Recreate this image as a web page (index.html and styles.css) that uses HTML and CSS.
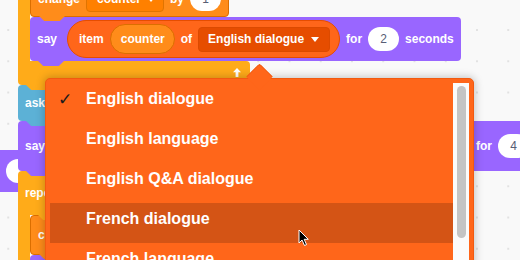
FILE: index.html
```html
<!DOCTYPE html>
<html lang="en">
<head>
    <meta charset="UTF-8">
    <meta name="viewport" content="width=device-width, initial-scale=1.0">
    <title>Scratch - list menu</title>
    <link rel="stylesheet" href="styles.css">
</head>
<body>
<div class="workspace">
    <!-- loose block at the left edge of the canvas -->
    <div class="script script-left">
        <div class="block looks block-think">think <span class="num"></span></div>
    </div>

    <div class="script script-main">
        <div class="c-block">
            <div class="c-body">
                <div class="c-arm"></div>
                <div class="c-inner">
                    <div class="block variables block-change">
                        change <span class="field">counter <i class="caret"></i></span> by <span class="num">1</span>
                    </div>
                    <div class="block looks block-say">
                        <span class="label">say</span>
                        <span class="reporter list">item <span class="var">counter</span> of <span class="field dark">English dialogue <i class="caret"></i></span></span>
                        for <span class="num">2</span> seconds
                    </div>
                </div>
            </div>
            <div class="block control c-bottom">
                <svg class="loop-icon" width="8" height="9" viewBox="0 0 8 9"><path d="M4 0 L8 4.2 L5.4 4.2 L5.4 9 L2.6 9 L2.6 4.2 L0 4.2 Z" fill="#fff"/></svg>
            </div>
        </div>
        <div class="block sensing block-ask">ask <span class="num">What's your name?</span> and wait</div>
        <div class="block looks block-say4">
            <span class="label">say</span>
            <span class="reporter join">join <span class="num">Hello</span></span>
            for <span class="num">4</span> seconds
        </div>
        <div class="c-block">
            <div class="block control c-head">repeat <span class="num">10</span></div>
            <div class="c-body">
                <div class="c-arm"></div>
                <div class="c-inner">
                    <div class="block variables block-inner">change <span class="field">counter <i class="caret"></i></span> by <span class="num">1</span></div>
                    <div class="block looks block-inner">next costume</div>
                </div>
            </div>
            <div class="block control c-bottom"></div>
        </div>
    </div>

    <!-- open dropdown of the list field -->
    <div class="dropdown">
        <div class="dropdown-arrow"></div>
        <div class="menu">
            <div class="menu-item"><span class="check">✓</span>English dialogue</div>
            <div class="menu-item"><span class="check"></span>English language</div>
            <div class="menu-item"><span class="check"></span>English Q&amp;A dialogue</div>
            <div class="menu-item hover"><span class="check"></span>French dialogue</div>
            <div class="menu-item"><span class="check"></span>French language</div>
            <div class="menu-item"><span class="check"></span>French Q&amp;A dialogue</div>
        </div>
        <div class="scroll-track"><div class="scroll-thumb"></div></div>
    </div>

    <svg class="cursor" width="12" height="18" viewBox="0 0 12 18">
        <path d="M1 1 L1 14 L4 11 L6.5 16.5 L8.5 15.6 L6.2 10.3 L10.3 10.3 Z" fill="#000" stroke="#fff" stroke-width="1"/>
    </svg>
</div>
</body>
</html>
```

FILE: styles.css
```css
body {
    margin: 0;
    font-family: "Liberation Sans", Arial, sans-serif;
    background-color: #f9f9f9;
}
.workspace {
    position: relative;
    width: 520px;
    height: 260px;
    overflow: hidden;
    background-color: #f9f9f9;
    background-image: radial-gradient(circle, #e2e2e2 1.1px, transparent 1.4px);
    background-size: 31.25px 31.25px;
    background-position: -7.4px 14.4px;
}

/* scripts sit at their own place on the canvas */
.script {
    position: absolute;
    display: flex;
    flex-direction: column;
    align-items: flex-start;
}
.script-main {
    left: 18px;
    top: -19px;
    z-index: 2;
}
.script-left {
    left: -43px;
    top: 150px;
    z-index: 1;
}

/* blocks */
.block {
    position: relative;
    display: flex;
    align-items: center;
    gap: 6px;
    padding: 0 7px;
    box-sizing: border-box;
    border-radius: 4px;
    color: white;
    font-size: 12px;
    font-weight: bold;
    white-space: nowrap;
}
.block::after {
    content: "";
    position: absolute;
    left: 8px;
    top: 100%;
    width: 26px;
    height: 5px;
    background: inherit;
    clip-path: polygon(0 0, 100% 0, 80% 100%, 20% 100%);
    z-index: 1;
}
.looks { background-color: #9966ff; }
.control { background-color: #ffab19; }
.sensing { background-color: #5cb1d6; }
.variables {
    background-color: #ff8c1a;
    border: 1px solid #db6e00;
}
.label { margin-right: 4px; }

.block-change { height: 36px; }
.block-say { height: 44px; }
.block-ask { height: 36px; }
.block-say4 { height: 50px; }
.block-inner { height: 40px; }
.block-think { height: 42px; width: 120px; }

/* C blocks */
.c-block {
    display: flex;
    flex-direction: column;
    align-items: flex-start;
}
.c-body {
    display: flex;
}
.c-arm {
    width: 12px;
    background-color: #ffab19;
}
.c-inner {
    display: flex;
    flex-direction: column;
    align-items: flex-start;
}
.c-head {
    height: 44px;
    width: 150px;
    border-bottom-left-radius: 0;
}
.c-head::after { left: 20px; }
.c-bottom {
    width: 232px;
    height: 24px;
    border-top-left-radius: 0;
    justify-content: flex-end;
    align-items: flex-start;
    padding: 7px 9px 0 0;
}

/* inputs */
.num {
    display: inline-flex;
    align-items: center;
    justify-content: center;
    min-width: 31px;
    height: 24px;
    padding: 0 12px;
    box-sizing: border-box;
    border-radius: 12px;
    background: white;
    color: #575e75;
    font-weight: normal;
}
.block-think .num { margin-left: 7px; }
.field {
    display: inline-flex;
    align-items: center;
    gap: 6px;
    height: 25px;
    padding: 0 8px 0 10px;
    box-sizing: border-box;
    border-radius: 4px;
    background-color: #ff8000;
    border: 1px solid #e07400;
}
.field.dark {
    gap: 7px;
    padding: 0 10px 0 9px;
    background-color: #e64d00;
    border-color: #dc4a00;
}
.caret {
    width: 0;
    height: 0;
    border-left: 4px solid transparent;
    border-right: 4px solid transparent;
    border-top: 5px solid white;
}
.reporter {
    display: inline-flex;
    align-items: center;
    gap: 6px;
    height: 38px;
    padding: 0 9px 0 11px;
    box-sizing: border-box;
    border-radius: 19px;
}
.reporter.list {
    background-color: #ff661a;
    border: 1px solid #e64d00;
}
.reporter.join {
    width: 415px;
    height: 42px;
    border-radius: 21px;
    background-color: #59c059;
    border: 1px solid #389438;
}
.var {
    display: inline-flex;
    align-items: center;
    height: 30px;
    padding: 0 9px 0 10px;
    box-sizing: border-box;
    border-radius: 15px;
    background-color: #ff8c1a;
    border: 1px solid #db6e00;
}

/* dropdown menu */
.dropdown {
    position: absolute;
    left: 45px;
    top: 78px;
    z-index: 5;
    width: 429px;
    height: 230px;
    box-sizing: border-box;
    display: flex;
    padding: 4px;
    background-color: #ff661a;
    border: 1px solid #f25a10;
    border-radius: 5px;
    box-shadow: 0 0 8px 1px rgba(0, 0, 0, 0.22);
}
.dropdown-arrow {
    position: absolute;
    left: 204px;
    top: -12px;
    width: 18px;
    height: 18px;
    background-color: #ff661a;
    border-top: 1px solid #f25a10;
    border-left: 1px solid #f25a10;
    border-top-left-radius: 3px;
    transform: rotate(45deg);
}
.menu {
    position: relative;
    flex: 1;
}
.menu-item {
    display: flex;
    height: 40px;
    padding: 0 0 8px 8px;
    box-sizing: border-box;
    line-height: 32px;
    color: white;
    font-size: 16px;
    font-weight: bold;
    white-space: nowrap;
}
.menu-item.hover {
    background-color: rgba(0, 0, 0, 0.17);
}
.check {
    width: 28px;
    flex-shrink: 0;
    font-family: "DejaVu Sans", sans-serif;
    font-size: 17px;
    font-weight: normal;
    color: #1a1a1a;
}
.scroll-track {
    width: 16px;
    background-color: #fbfbfb;
}
.scroll-thumb {
    width: 9px;
    height: 152px;
    margin: 3px 0 0 4px;
    border-radius: 5px;
    background-color: #c4c4c4;
}

.cursor {
    position: absolute;
    left: 298px;
    top: 229px;
    z-index: 6;
}
```
